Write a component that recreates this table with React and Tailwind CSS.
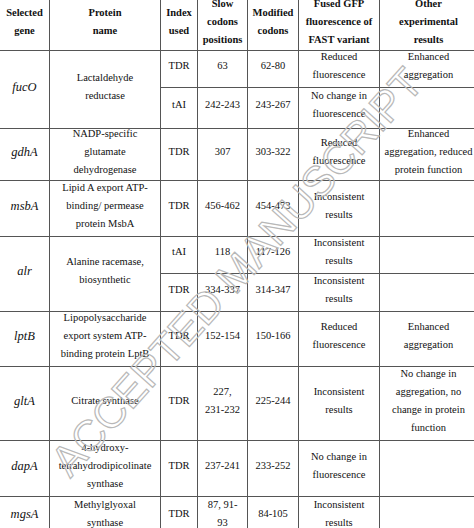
import React from "react";

const B = "border-r border-b border-[#555]";

function C({ children, className = "", italic = false, bold = false }) {
  return (
    <div
      className={`${B} flex flex-col items-center justify-center text-center ${bold ? "font-bold pb-[0px]" : "pb-[6px]"} ${italic ? "italic text-[12.5px]" : ""} ${className}`}
    >
      {children}
    </div>
  );
}

function L({ lines }) {
  return (
    <>
      {lines.map((l, i) => (
        <span key={i} className="block whitespace-nowrap">
          {l}
        </span>
      ))}
    </>
  );
}

export default function App() {
  return (
    <div className="relative w-[474px] h-[528px] overflow-hidden bg-white">
      <div className="grid grid-cols-[50px_111px_37px_50px_51px_81px_98px] grid-rows-[58px_37px_41px_52px_56px_37px_38px_55px_74px_56px_40px] -mt-[7px] [font-family:'Liberation_Serif','Times_New_Roman',serif] text-[10.5px] leading-[18px] text-[#111]">
        {/* header */}
        <C bold><L lines={["Selected", "gene"]} /></C>
        <C bold><L lines={["Protein", "name"]} /></C>
        <C bold><L lines={["Index", "used"]} /></C>
        <C bold><L lines={["Slow", "codons", "positions"]} /></C>
        <C bold><L lines={["Modified", "codons"]} /></C>
        <C bold><L lines={["Fused GFP", "fluorescence of", "FAST variant"]} /></C>
        <C bold><L lines={["Other", "experimental", "results"]} /></C>

        {/* fucO */}
        <C italic className="row-span-2">fucO</C>
        <C className="row-span-2"><L lines={["Lactaldehyde", "reductase"]} /></C>
        <C>TDR</C>
        <C>63</C>
        <C>62-80</C>
        <C><L lines={["Reduced", "fluorescence"]} /></C>
        <C><L lines={["Enhanced", "aggregation"]} /></C>
        <C>tAI</C>
        <C>242-243</C>
        <C>243-267</C>
        <C><L lines={["No change in", "fluorescence"]} /></C>
        <C />

        {/* gdhA */}
        <C italic>gdhA</C>
        <C><L lines={["NADP-specific", "glutamate", "dehydrogenase"]} /></C>
        <C>TDR</C>
        <C>307</C>
        <C>303-322</C>
        <C><L lines={["Reduced", "fluorescence"]} /></C>
        <C><L lines={["Enhanced", "aggregation, reduced", "protein function"]} /></C>

        {/* msbA */}
        <C italic>msbA</C>
        <C><L lines={["Lipid A export ATP-", "binding/ permease", "protein MsbA"]} /></C>
        <C>TDR</C>
        <C>456-462</C>
        <C>454-473</C>
        <C><L lines={["Inconsistent", "results"]} /></C>
        <C />

        {/* alr */}
        <C italic className="row-span-2">alr</C>
        <C className="row-span-2"><L lines={["Alanine racemase,", "biosynthetic"]} /></C>
        <C>tAI</C>
        <C>118</C>
        <C>117-126</C>
        <C><L lines={["Inconsistent", "results"]} /></C>
        <C />
        <C>TDR</C>
        <C>334-337</C>
        <C>314-347</C>
        <C><L lines={["Inconsistent", "results"]} /></C>
        <C />

        {/* lptB */}
        <C italic>lptB</C>
        <C><L lines={["Lipopolysaccharide", "export system ATP-", "binding protein LptB"]} /></C>
        <C>TDR</C>
        <C>152-154</C>
        <C>150-166</C>
        <C><L lines={["Reduced", "fluorescence"]} /></C>
        <C><L lines={["Enhanced", "aggregation"]} /></C>

        {/* gltA */}
        <C italic>gltA</C>
        <C>Citrate synthase</C>
        <C>TDR</C>
        <C><L lines={["227,", "231-232"]} /></C>
        <C>225-244</C>
        <C><L lines={["Inconsistent", "results"]} /></C>
        <C><L lines={["No change in", "aggregation, no", "change in protein", "function"]} /></C>

        {/* dapA */}
        <C italic>dapA</C>
        <C><L lines={["4-hydroxy-", "tetrahydrodipicolinate", "synthase"]} /></C>
        <C>TDR</C>
        <C>237-241</C>
        <C>233-252</C>
        <C><L lines={["No change in", "fluorescence"]} /></C>
        <C />

        {/* mgsA */}
        <C italic>mgsA</C>
        <C><L lines={["Methylglyoxal", "synthase"]} /></C>
        <C>TDR</C>
        <C><L lines={["87, 91-", "93"]} /></C>
        <C>84-105</C>
        <C><L lines={["Inconsistent", "results"]} /></C>
        <C />
      </div>

      {/* watermark */}
      <div className="pointer-events-none absolute left-[237px] top-[272px] -translate-x-1/2 -translate-y-1/2 rotate-[-48deg] whitespace-nowrap [font-family:'Liberation_Sans',Arial,sans-serif] text-[43px] leading-none text-transparent [-webkit-text-stroke:1.2px_#b8b8b8]">
        ACCEPTED MANUSCRIPT
      </div>
    </div>
  );
}
